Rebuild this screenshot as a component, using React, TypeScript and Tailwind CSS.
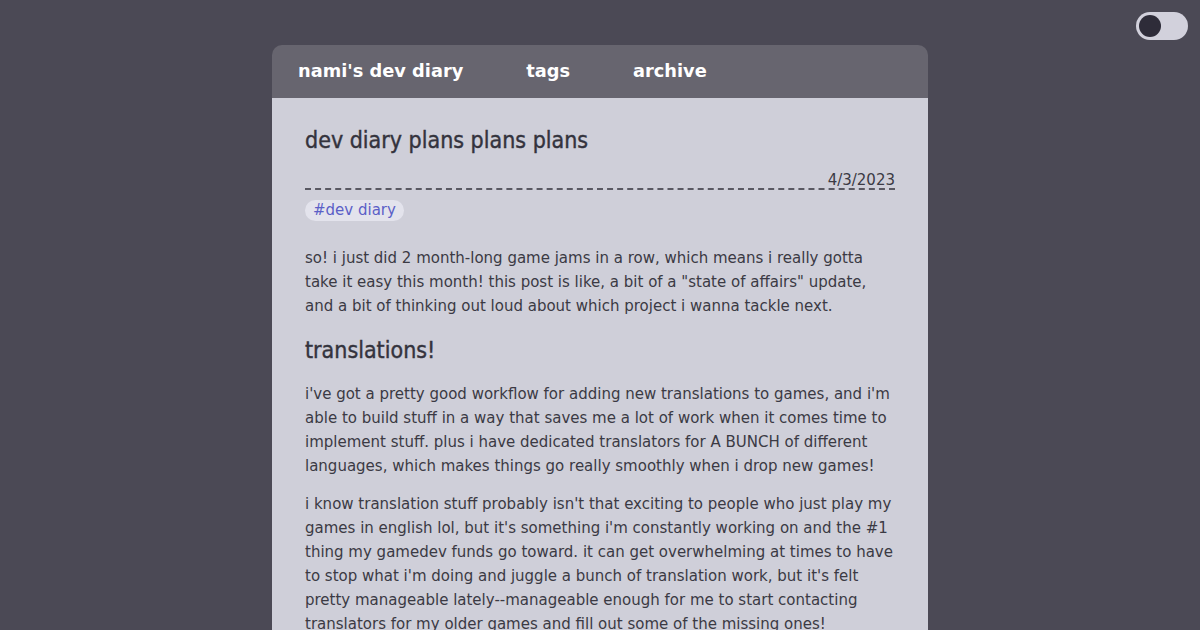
import React from "react";

const body = "font-['DejaVu_Sans',sans-serif]";

export default function App() {
  return (
    <div className={`min-h-screen bg-[#4b4955] relative ${body}`}>
      {/* theme toggle */}
      <button className="absolute top-[12px] right-[12px] w-[52px] h-[28px] rounded-full bg-[#d2d1dc] flex items-center px-[3px]">
        <span className="w-[22px] h-[22px] rounded-full bg-[#2e2c39]" />
      </button>

      <div className="pt-[45px] flex justify-center">
        <div className="w-[656px] rounded-t-[10px] overflow-hidden">
          <nav className="h-[53px] bg-[#67656f] flex items-center pl-[26px] pb-px gap-[63px] text-white font-bold text-[17.8px]">
            <span>nami's dev diary</span>
            <span>tags</span>
            <span>archive</span>
          </nav>

          <main className="bg-[#cfcfd9] px-[33px] pt-[27px] pb-10 text-[#3b3a44] text-[15px] leading-[24px]">
            <h1 className="font-['DejaVu_Sans_Condensed',sans-serif] text-[23px] leading-[30px] text-[#34333d] [-webkit-text-stroke:0.4px_#34333d]">
              dev diary plans plans plans
            </h1>
            <div className="mt-[19px] pb-[2px] border-b-2 border-dashed border-[#595862] text-right leading-[12px]">
              4/3/2023
            </div>
            <div className="mt-[10px] leading-[21px]">
              <span className="inline-block bg-[#e3e3ec] text-[#5b5fc7] rounded-full px-[8px] leading-[21px]">
                #dev diary
              </span>
            </div>

            <p className="mt-[25px]">
              so! i just did 2 month-long game jams in a row, which means i really gotta
              take it easy this month! this post is like, a bit of a "state of affairs" update,
              and a bit of thinking out loud about which project i wanna tackle next.
            </p>

            <h2 className="mt-[17px] font-['DejaVu_Sans_Condensed',sans-serif] text-[23px] leading-[30px] text-[#34333d] [-webkit-text-stroke:0.4px_#34333d]">
              translations!
            </h2>

            <p className="mt-[17px]">
              i've got a pretty good workflow for adding new translations to games, and i'm
              able to build stuff in a way that saves me a lot of work when it comes time to
              implement stuff. plus i have dedicated translators for A BUNCH of different
              languages, which makes things go really smoothly when i drop new games!
            </p>

            <p className="mt-[14px]">
              i know translation stuff probably isn't that exciting to people who just play my
              games in english lol, but it's something i'm constantly working on and the #1
              thing my gamedev funds go toward. it can get overwhelming at times to have
              to stop what i'm doing and juggle a bunch of translation work, but it's felt
              pretty manageable lately--manageable enough for me to start contacting
              translators for my older games and fill out some of the missing ones!
            </p>
          </main>
        </div>
      </div>
    </div>
  );
}
